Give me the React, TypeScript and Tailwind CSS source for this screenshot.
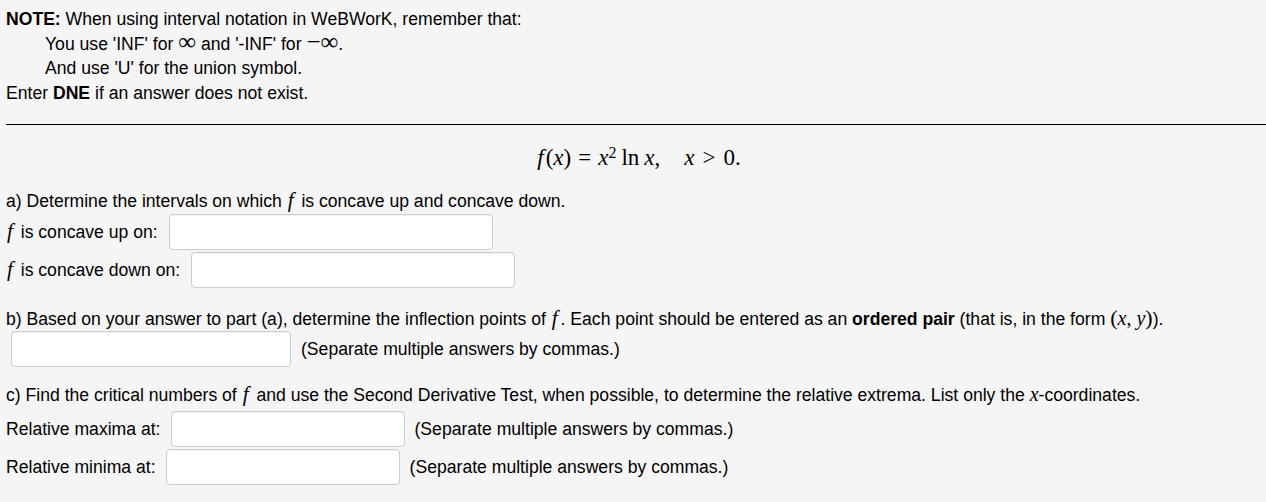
import React from "react";

const sans = "font-['Liberation_Sans',Arial,sans-serif]";
const serif = "font-['Liberation_Serif','Times_New_Roman',serif]";

function MathF() {
  return <span className={`${serif} italic text-[21px] leading-[0] pl-[1px] pr-[3px]`}>f</span>;
}

function AnswerBox({ width, className = "" }: { width: string; className?: string }) {
  return (
    <input
      type="text"
      className={`h-[36px] ${width} shrink-0 rounded-[4px] border border-[#cccccc] bg-white px-2 outline-none shadow-[inset_0_1px_1px_rgba(0,0,0,0.05)] ${className}`}
    />
  );
}

export default function App() {
  return (
    <div className={`min-h-[502px] bg-[#f5f5f5] text-[17.6px] leading-[24.5px] text-black ${sans}`}>
      <div className="pl-[6px] pt-[7px]">
        <div>
          <b>NOTE:</b> When using interval notation in WeBWorK, remember that:
        </div>
        <div className="pl-[39px]">
          You use 'INF' for <span className={`${serif} text-[25px] leading-[0]`}>∞</span> and '-INF' for{" "}
          <span className={`${serif} text-[25px] leading-[0]`}>−∞</span>.
        </div>
        <div className="pl-[39px]">And use 'U' for the union symbol.</div>
        <div>
          Enter <b>DNE</b> if an answer does not exist.
        </div>
      </div>

      <div className="ml-[6px] mt-[19px] border-t border-black" />

      <div className={`mt-[21px] flex h-[24px] items-center justify-center pl-[12px] text-[23px] ${serif}`}>
        <span className="italic">f</span>
        <span className="ml-[2px]">(</span>
        <span className="italic">x</span>
        <span>)</span>
        <span className="mx-[7px]">=</span>
        <span className="italic">x</span>
        <sup className="relative -top-[5px] text-[16px]">2</sup>
        <span className="ml-[5px]">ln</span>
        <span className="ml-[5px] italic">x</span>
        <span>,</span>
        <span className="ml-[24px] italic">x</span>
        <span className="mx-[8px]">&gt;</span>
        <span>0.</span>
      </div>

      <div className="px-[6px]">
        <div className="mt-[19px] h-[24px]">
          a) Determine the intervals on which <MathF /> is concave up and concave down.
        </div>
        <div className="mt-[1px] flex h-[36px] items-center">
          <span>
            <MathF /> is concave up on:
          </span>
          <AnswerBox width="w-[324px]" className="ml-[11px]" />
        </div>
        <div className="mt-[2px] flex h-[36px] items-center">
          <span>
            <MathF /> is concave down on:
          </span>
          <AnswerBox width="w-[324px]" className="ml-[11px]" />
        </div>

        <div className="mt-[19px] h-[24px] whitespace-nowrap">
          b) Based on your answer to part (a), determine the inflection points of <MathF />. Each point
          should be entered as an <b>ordered pair</b> (that is, in the form{" "}
          <span className={`${serif} text-[20px] leading-[0]`}>
            <span className="text-[22px]">(</span>
            <span className="italic">x</span>, <span className="italic">y</span>
            <span className="text-[22px]">)</span>
          </span>
          ).
        </div>
        <div className="flex h-[36px] items-center">
          <AnswerBox width="w-[280px]" className="ml-[5px]" />
          <span className="ml-[10px]">(Separate multiple answers by commas.)</span>
        </div>

        <div className="mt-[16px] h-[24px] whitespace-nowrap">
          c) Find the critical numbers of <MathF /> and use the Second Derivative Test, when possible, to
          determine the relative extrema. List only the{" "}
          <span className={`${serif} italic text-[20px] leading-[0]`}>x</span>-coordinates.
        </div>
        <div className="mt-[4px] flex h-[36px] items-center">
          <span>Relative maxima at:</span>
          <AnswerBox width="w-[234px]" className="ml-[10px]" />
          <span className="ml-[10px]">(Separate multiple answers by commas.)</span>
        </div>
        <div className="mt-[2px] flex h-[36px] items-center">
          <span>Relative minima at:</span>
          <AnswerBox width="w-[234px]" className="ml-[10px]" />
          <span className="ml-[10px]">(Separate multiple answers by commas.)</span>
        </div>
      </div>
    </div>
  );
}
